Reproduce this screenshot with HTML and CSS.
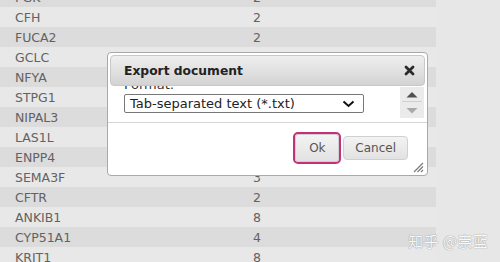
FILE: index.html
```html
<!DOCTYPE html>
<html>
<head>
<meta charset="utf-8">
<link rel="stylesheet" href="styles.css">
</head>
<body>
<div class="list">
  <div class="row dark"><span>PGK</span><span>2</span></div>
  <div class="row"><span>CFH</span><span>2</span></div>
  <div class="row dark"><span>FUCA2</span><span>2</span></div>
  <div class="row"><span>GCLC</span><span></span></div>
  <div class="row dark"><span>NFYA</span><span></span></div>
  <div class="row"><span>STPG1</span><span></span></div>
  <div class="row dark"><span>NIPAL3</span><span></span></div>
  <div class="row"><span>LAS1L</span><span></span></div>
  <div class="row dark"><span>ENPP4</span><span></span></div>
  <div class="row"><span>SEMA3F</span><span>3</span></div>
  <div class="row dark"><span>CFTR</span><span>2</span></div>
  <div class="row"><span>ANKIB1</span><span>8</span></div>
  <div class="row dark"><span>CYP51A1</span><span>4</span></div>
  <div class="row"><span>KRIT1</span><span>8</span></div>
</div>

<div class="dialog">
  <div class="titlebar">
    <span class="title">Export document</span>
    <svg class="close" width="11" height="11" viewBox="0 0 11 11"><path d="M2 2 L9 9 M9 2 L2 9" stroke="#2b2b2b" stroke-width="2.8" stroke-linecap="round"/></svg>
  </div>
  <div class="content">
    <div class="form">
      <div class="label">Format:</div>
      <div class="select">
        <span>Tab-separated text (*.txt)</span>
        <svg width="13" height="8" viewBox="0 0 13 8"><path d="M1.5 1.5 L6.5 6 L11.5 1.5" fill="none" stroke="#111" stroke-width="2"/></svg>
      </div>
    </div>
    <div class="scrollbar">
      <svg width="24" height="31" viewBox="0 0 24 31">
        <path d="M6.5 10.5 L12 5 L17.5 10.5 Z" fill="#505050"/>
        <line x1="2" y1="14.5" x2="22" y2="14.5" stroke="#cfcfcf" stroke-width="1"/>
        <path d="M6.5 21 L12 26.5 L17.5 21 Z" fill="#a9a9a9"/>
      </svg>
    </div>
  </div>
  <div class="buttons">
    <button class="btn ok">Ok</button>
    <button class="btn">Cancel</button>
  </div>
  <svg class="grip" width="12" height="12" viewBox="0 0 12 12">
    <path d="M11 2 L2 11 M11 5.5 L5.5 11 M11 9 L9 11" stroke="#7a7a7a" stroke-width="1.2"/>
  </svg>
</div>

<div class="watermark">知乎 @崇蓝</div>
</body>
</html>
```
FILE: styles.css
```css
html, body {
  margin: 0;
  padding: 0;
}
body {
  width: 500px;
  height: 262px;
  overflow: hidden;
  background: #e7e7e7;
  font-family: "DejaVu Sans", Verdana, sans-serif;
  position: relative;
}
.list {
  margin-top: -13px;
  width: 436px;
}
.row {
  display: grid;
  grid-template-columns: 238px 1fr;
  height: 20px;
  align-items: center;
  padding-left: 15px;
  font-size: 12.5px;
  color: #626262;
  background: #e8e8e8;
}
.row.dark {
  background: #dcdcdc;
}
.dialog {
  position: absolute;
  left: 107px;
  top: 52px;
  width: 315px;
  height: 118px;
  padding: 2px;
  border: 1px solid #a9a9a9;
  border-radius: 4px;
  background: #fff;
  display: flex;
  flex-direction: column;
}
.titlebar {
  height: 29px;
  flex: none;
  border: 1px solid #c8c8c8;
  border-radius: 4px;
  background: linear-gradient(#efefef, #d3d3d3);
  display: flex;
  align-items: center;
  justify-content: space-between;
  padding: 0 9px 0 13px;
}
.title {
  font-weight: bold;
  font-size: 12.3px;
  color: #222;
}
.close {
  display: block;
}
.content {
  height: 36px;
  flex: none;
  overflow: hidden;
  display: flex;
  justify-content: space-between;
}
.form {
  padding-left: 14px;
}
.label {
  margin-top: -9px;
  font-size: 13px;
  line-height: 16px;
  color: #333;
}
.select {
  margin-top: 1px;
  width: 225px;
  height: 17px;
  border: 1px solid #777;
  border-radius: 2px;
  display: flex;
  align-items: center;
  justify-content: space-between;
  padding: 0 8px 0 5px;
  font-size: 13px;
  color: #222;
}
.select svg {
  display: block;
}
.scrollbar {
  width: 24px;
  height: 31px;
  margin-top: 1px;
  margin-right: 1px;
  background: #ebebeb;
}
.scrollbar svg {
  display: block;
}
.buttons {
  flex: 1;
  border-top: 1px solid #d4d4d4;
  margin: 0 -2px;
  display: flex;
  justify-content: flex-end;
  align-items: center;
  gap: 4px;
  padding-right: 19px;
}
.btn {
  font-family: "DejaVu Sans", Verdana, sans-serif;
  font-size: 12px;
  color: #555;
  height: 24px;
  padding: 0 11px;
  border: 1px solid #d0d0d0;
  border-radius: 4px;
  background: linear-gradient(#f3f3f3, #e2e2e2);
}
.btn.ok {
  height: 28px;
  width: 44px;
  padding: 0;
  outline: 2px solid #c4317a;
  outline-offset: 0;
  border-radius: 3px;
}
.grip {
  position: absolute;
  right: 3px;
  bottom: 2px;
}
.watermark {
  position: absolute;
  left: 408px;
  top: 230px;
  font-family: "Noto Sans CJK SC", sans-serif;
  font-size: 15px;
  color: rgba(255, 255, 255, 0.95);
  text-shadow: 0 0 1px #9a9a9a, 0 0 1px #9a9a9a;
  letter-spacing: 0.5px;
}
```
